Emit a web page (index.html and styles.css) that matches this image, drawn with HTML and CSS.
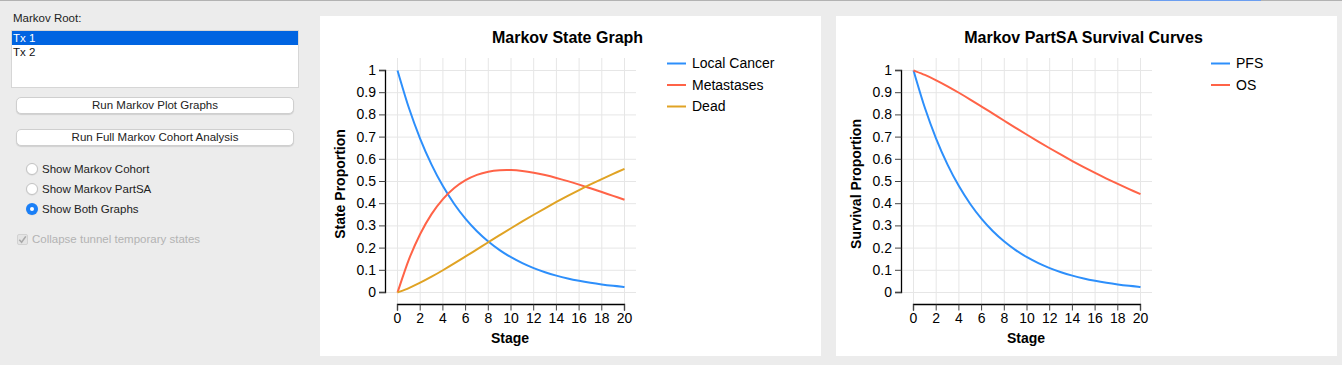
FILE: index.html
```html
<!DOCTYPE html>
<html lang="en">
<head>
    <meta charset="UTF-8">
    <meta name="viewport" content="width=device-width, initial-scale=1.0">
    <title>Markov Graphs</title>
    <link rel="stylesheet" href="styles.css">
</head>
<body>
    <div class="window">
        <div class="sidebar">
            <div class="field-label">Markov Root:</div>
            <div class="listbox">
                <div class="list-item selected">Tx 1</div>
                <div class="list-item">Tx 2</div>
            </div>

            <button class="push-button">Run Markov Plot Graphs</button>
            <button class="push-button second">Run Full Markov Cohort Analysis</button>

            <div class="radio-group">
                <label class="option"><span class="radio"></span>Show Markov Cohort</label>
                <label class="option"><span class="radio"></span>Show Markov PartSA</label>
                <label class="option"><span class="radio checked"></span>Show Both Graphs</label>
            </div>

            <label class="option disabled">
                <span class="checkbox">
                    <svg width="9" height="9" viewBox="0 0 9 9"><polyline points="1.3,4.8 3.6,7.2 7.8,1.4"/></svg>
                </span>
                Collapse tunnel temporary states
            </label>
        </div>

        <div class="charts">
            <div class="chart-panel" id="state-chart"></div>
            <div class="chart-panel" id="survival-chart"></div>
        </div>
    </div>

    <script src="script.js"></script>
</body>
</html>
```

FILE: styles.css
```css
body {
    margin: 0;
    padding: 0;
    background-color: #ececec;
    font-family: "Liberation Sans", Arial, sans-serif;
    font-size: 11.5px;
    color: #222;
}

.window {
    position: relative;
    display: flex;
    border-top: 1px solid #b2b2b2;
    height: 364px;
}

/* focus strip over the top border */
.window::before {
    content: '';
    position: absolute;
    top: -1px;
    left: 1150px;
    width: 111px;
    height: 1px;
    background-color: #6b9ef0;
}

.sidebar {
    width: 320px;
    flex-shrink: 0;
    box-sizing: border-box;
    padding: 10px 21px 0 11px;
}

.field-label {
    line-height: 14px;
    padding-left: 2px;
}

.listbox {
    margin-top: 5px;
    height: 56px;
    background-color: white;
    border: 1px solid #d6d6d6;
}

.list-item {
    height: 14px;
    line-height: 14px;
    padding-left: 1px;
    color: #111;
}

.list-item.selected {
    background-color: #0064e1;
    color: white;
}

.push-button {
    display: block;
    width: 278px;
    height: 17px;
    margin: 9px 0 0 5px;
    padding: 0;
    background-color: white;
    border: 1px solid #cfcfcf;
    border-radius: 5px;
    box-shadow: 0 1px 1px rgba(0, 0, 0, 0.12);
    font-family: inherit;
    font-size: 11.5px;
    color: #222;
    line-height: 15px;
}

.push-button.second {
    margin-top: 15px;
}

.radio-group {
    margin-top: 13px;
    padding-left: 15px;
}

.option {
    display: flex;
    align-items: center;
    height: 20px;
}

.radio {
    width: 12px;
    height: 12px;
    box-sizing: border-box;
    margin-right: 4px;
    border-radius: 50%;
    background-color: white;
    border: 1px solid #c4c4c4;
    box-shadow: 0 0.5px 1px rgba(0, 0, 0, 0.1);
}

.radio.checked {
    border: none;
    background-color: #1a7ff7;
    position: relative;
}

.radio.checked::after {
    content: '';
    position: absolute;
    top: 4px;
    left: 4px;
    width: 4px;
    height: 4px;
    border-radius: 50%;
    background-color: white;
}

.option.disabled {
    margin-top: 10px;
    padding-left: 6px;
    color: #b3b3b3;
}

.checkbox {
    display: flex;
    align-items: center;
    justify-content: center;
    width: 11px;
    height: 11px;
    box-sizing: border-box;
    margin-right: 4px;
    border: 1px solid #d2d2d2;
    border-radius: 2px;
    background-color: #e4e4e4;
}

.checkbox polyline {
    fill: none;
    stroke: #a9a9a9;
    stroke-width: 1.6;
}

.charts {
    display: flex;
    gap: 15px;
    padding-top: 15px;
}

.chart-panel {
    width: 501px;
    height: 340px;
    background-color: white;
}

.chart-panel svg {
    display: block;
}

.chart-panel text {
    font-family: "Liberation Sans", Arial, sans-serif;
    font-size: 14px;
    fill: #000;
}

.chart-panel .title {
    font-size: 16px;
    font-weight: bold;
}

.chart-panel .axis-title {
    font-weight: bold;
}

.grid {
    stroke: #e6e6e6;
    stroke-width: 1;
}

.axis {
    fill: none;
    stroke: #000;
    stroke-width: 1.3;
}

.tick {
    stroke: #444;
    stroke-width: 1;
}

.series {
    fill: none;
    stroke-width: 2;
}
```

FILE: script.js
```js
// Markov cohort: Local Cancer -> Metastases -> Dead
function runCohort(steps) {
    const rows = [];
    let lc = 1, met = 0, dead = 0;
    for (let t = 0; t <= steps; t++) {
        rows.push({ lc, met, dead });
        const nextLc = lc * 0.832;
        const nextMet = met * 0.95 + lc * 0.148;
        const nextDead = dead + lc * 0.02 + met * 0.05;
        lc = nextLc;
        met = nextMet;
        dead = nextDead;
    }
    return rows;
}

const rows = runCohort(20);

const BLUE = '#2d8ffb';
const RED = '#ff6347';
const GOLD = '#e0a324';

const charts = [
    {
        id: 'state-chart',
        title: 'Markov State Graph',
        yLabel: 'State Proportion',
        legendX: 347,
        series: [
            { name: 'Local Cancer', color: BLUE, values: rows.map(r => r.lc) },
            { name: 'Metastases', color: RED, values: rows.map(r => r.met) },
            { name: 'Dead', color: GOLD, values: rows.map(r => r.dead) }
        ]
    },
    {
        id: 'survival-chart',
        title: 'Markov PartSA Survival Curves',
        yLabel: 'Survival Proportion',
        legendX: 375,
        series: [
            { name: 'PFS', color: BLUE, values: rows.map(r => r.lc) },
            { name: 'OS', color: RED, values: rows.map(r => 1 - r.dead) }
        ]
    }
];

// plot box
const X0 = 77.5, X1 = 304.5, Y0 = 276.5, Y1 = 54.5;
const sx = s => X0 + (X1 - X0) * s / 20;
const sy = v => Y0 - (Y0 - Y1) * v;

// smooth line through the points (catmull-rom as beziers)
function smoothPath(pts) {
    let d = `M${pts[0][0]},${pts[0][1]}`;
    for (let i = 0; i < pts.length - 1; i++) {
        const p0 = pts[i - 1] || pts[i];
        const p1 = pts[i];
        const p2 = pts[i + 1];
        const p3 = pts[i + 2] || p2;
        const c1x = p1[0] + (p2[0] - p0[0]) / 6;
        const c1y = p1[1] + (p2[1] - p0[1]) / 6;
        const c2x = p2[0] - (p3[0] - p1[0]) / 6;
        const c2y = p2[1] - (p3[1] - p1[1]) / 6;
        d += `C${c1x.toFixed(2)},${c1y.toFixed(2)} ${c2x.toFixed(2)},${c2y.toFixed(2)} ${p2[0].toFixed(2)},${p2[1].toFixed(2)}`;
    }
    return d;
}

function drawChart(cfg) {
    let svg = '<svg width="501" height="340" viewBox="0 0 501 340">';

    // gridlines
    for (let s = 0; s <= 20; s += 2) {
        svg += `<line class="grid" x1="${sx(s)}" x2="${sx(s)}" y1="42" y2="288"/>`;
    }
    for (let i = 0; i <= 10; i++) {
        const y = sy(i / 10);
        svg += `<line class="grid" x1="65.5" x2="316" y1="${y}" y2="${y}"/>`;
    }

    // y axis
    svg += `<path class="axis" d="M59,${Y1}H65.5V${Y0}H59"/>`;
    for (let i = 0; i <= 10; i++) {
        const y = sy(i / 10);
        const label = i === 0 ? '0' : i === 10 ? '1' : '0.' + i;
        svg += `<line class="tick" x1="59" x2="65.5" y1="${y}" y2="${y}"/>`;
        svg += `<text x="56" y="${y}" dy="0.32em" text-anchor="end">${label}</text>`;
    }

    // x axis
    svg += `<path class="axis" d="M${X0},294.5V288.5H${X1}V294.5"/>`;
    for (let s = 0; s <= 20; s += 2) {
        svg += `<line class="tick" x1="${sx(s)}" x2="${sx(s)}" y1="288.5" y2="294.5"/>`;
        svg += `<text x="${sx(s)}" y="297" dy="0.71em" text-anchor="middle">${s}</text>`;
    }

    // titles
    svg += `<text class="title" x="247.5" y="27" text-anchor="middle">${cfg.title}</text>`;
    svg += `<text class="axis-title" x="190" y="327" text-anchor="middle">Stage</text>`;
    svg += `<text class="axis-title" transform="rotate(-90)" x="-168" y="25" text-anchor="middle">${cfg.yLabel}</text>`;

    // series + legend
    cfg.series.forEach((series, i) => {
        const pts = series.values.map((v, s) => [sx(s), sy(v)]);
        svg += `<path class="series" stroke="${series.color}" d="${smoothPath(pts)}"/>`;

        const ly = 47.5 + i * 21.5;
        svg += `<line x1="${cfg.legendX}" x2="${cfg.legendX + 19}" y1="${ly}" y2="${ly}" stroke="${series.color}" stroke-width="2"/>`;
        svg += `<text x="${cfg.legendX + 25}" y="${ly}" dy="0.35em">${series.name}</text>`;
    });

    svg += '</svg>';
    document.getElementById(cfg.id).innerHTML = svg;
}

charts.forEach(drawChart);
```
